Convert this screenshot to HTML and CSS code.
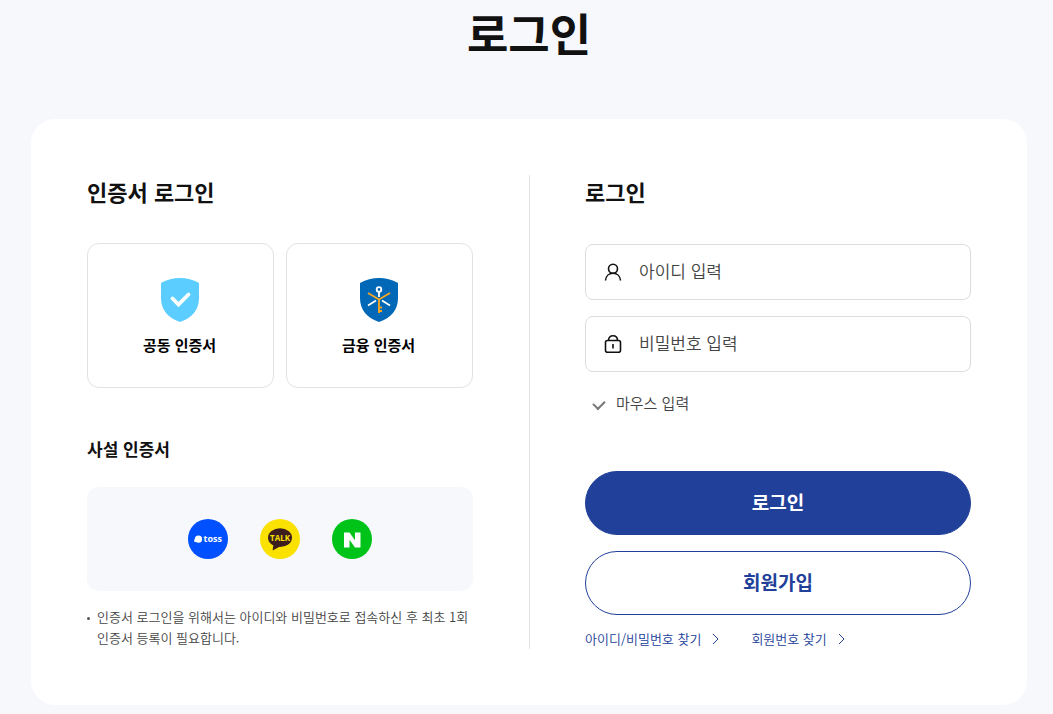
FILE: index.html
```html
<!DOCTYPE html>
<html lang="ko">
<head>
    <meta charset="UTF-8">
    <meta name="viewport" content="width=device-width, initial-scale=1.0">
    <title>로그인</title>
    <link rel="stylesheet" href="styles.css">
</head>
<body>
    <main class="page">
        <h1 class="page-title">로그인</h1>

        <div class="login-box">
            <!-- Certificate login -->
            <section class="cert">
                <h2 class="section-title">인증서 로그인</h2>

                <div class="cert-list">
                    <button type="button" class="cert-card">
                        <svg width="38" height="44" viewBox="0 0 38 44" aria-hidden="true">
                            <path d="M0 5Q9 0 19 0T38 5V20C38 32 31 40 19 44C7 40 0 32 0 20Z" fill="#5bceff"/>
                            <path d="M11.500 20.500L17.500 26.500L27.500 16.500" fill="none" stroke="#fff" stroke-width="3.8" stroke-linecap="round"/>
                        </svg>
                        <span>공동 인증서</span>
                    </button>
                    <button type="button" class="cert-card">
                        <svg width="38" height="44" viewBox="0 0 38 44" aria-hidden="true">
                            <path d="M0 5Q9 0 19 0T38 5V20C38 32 31 40 19 44C7 40 0 32 0 20Z" fill="#0068b7"/>
                            <g fill="none" stroke="#fff" stroke-width="1.8">
                                <circle cx="19" cy="11.5" r="2.3"/>
                                <path d="M19 14V19M16 22.5L8 27.5M22 22.5L30 27.5"/>
                            </g>
                            <path d="M8 15L19 21.5L30 15M19 21V35M19 29.5H22M19 33H22" fill="none" stroke="#f5a623" stroke-width="1.9"/>
                        </svg>
                        <span>금융 인증서</span>
                    </button>
                </div>

                <h3 class="sub-title">사설 인증서</h3>
                <div class="private-list">
                    <button type="button" class="round-btn" aria-label="toss">
                        <svg width="40" height="40" viewBox="0 0 40 40">
                            <circle cx="20" cy="20" r="20" fill="#0050ff"/>
                            <circle cx="10.5" cy="20.2" r="3.6" fill="#fff"/>
                            <path d="M10 17L8.2 17.6Q6.2 20 6 22.8L8.5 23Z" fill="#fff"/>
                            <text x="15.5" y="23" class="toss-text">toss</text>
                        </svg>
                    </button>
                    <button type="button" class="round-btn" aria-label="kakao talk">
                        <svg width="40" height="40" viewBox="0 0 40 40">
                            <circle cx="20" cy="20" r="20" fill="#fae100"/>
                            <ellipse cx="20" cy="18.7" rx="12" ry="9.4" fill="#3c1e1e"/>
                            <path d="M13.5 25L12.6 31.5L20 27.5Z" fill="#3c1e1e"/>
                            <text x="20" y="22" class="talk-text">TALK</text>
                        </svg>
                    </button>
                    <button type="button" class="round-btn" aria-label="naver">
                        <svg width="40" height="40" viewBox="0 0 40 40">
                            <circle cx="20" cy="20" r="20" fill="#00c31a"/>
                            <path d="M12 13.5H17.5L23 21.2V13.5H28.5V28.5H23L17.5 20.8V28.5H12Z" fill="#fff"/>
                        </svg>
                    </button>
                </div>

                <ul class="notice">
                    <li>인증서 로그인을 위해서는 아이디와 비밀번호로 접속하신 후 최초 1회 인증서 등록이 필요합니다.</li>
                </ul>
            </section>

            <!-- ID / password login -->
            <section class="account">
                <h2 class="section-title">로그인</h2>

                <form class="login-form">
                    <label class="field">
                        <svg width="18" height="18" viewBox="0 0 18 18" aria-hidden="true">
                            <g fill="none" stroke="#111" stroke-width="1.6">
                                <circle cx="9" cy="5.8" r="4.5"/>
                                <path d="M1.500 17.500C1.800 13 5 10.300 9 10.300S16.200 13 16.500 17.500"/>
                            </g>
                        </svg>
                        <input type="text" placeholder="아이디 입력" aria-label="아이디">
                    </label>
                    <label class="field">
                        <svg width="18" height="18" viewBox="0 0 18 18" aria-hidden="true">
                            <g fill="none" stroke="#111" stroke-width="1.6">
                                <rect x="1.5" y="5.500" width="15" height="11.700" rx="2"/>
                                <path d="M4.500 5.500C4.500 2.500 6.300.8 9 .8S13.500 2.500 13.500 5.500M9 9V13.500"/>
                            </g>
                        </svg>
                        <input type="password" placeholder="비밀번호 입력" aria-label="비밀번호">
                    </label>
                    <label class="mouse-check">
                        <input type="checkbox">
                        마우스 입력
                    </label>

                    <button type="submit" class="btn btn-primary">로그인</button>
                    <button type="button" class="btn btn-line">회원가입</button>
                </form>

                <div class="find-links">
                    <a href="#">아이디/비밀번호 찾기
                        <svg width="7" height="12" viewBox="0 0 7 12" aria-hidden="true"><path d="M1 1L6 6L1 11" fill="none" stroke="#214099"/></svg>
                    </a>
                    <a href="#">회원번호 찾기
                        <svg width="7" height="12" viewBox="0 0 7 12" aria-hidden="true"><path d="M1 1L6 6L1 11" fill="none" stroke="#214099"/></svg>
                    </a>
                </div>
            </section>
        </div>
    </main>
</body>
</html>
```
FILE: styles.css
```css
* { box-sizing: border-box; }

body {
    margin: 0;
    background-color: #f7f8fc;
    color: #111;
    font-family: "Noto Sans CJK KR", sans-serif;
    font-weight: 350;
}

button, input {
    font-family: inherit;
    color: inherit;
}

button { cursor: pointer; }

h1, h2, h3, ul {
    margin: 0;
    padding: 0;
}

.page { padding: 0 26px 9px 31px; }

.page-title {
    margin-bottom: 54px;
    font-size: 45px;
    line-height: 65px;
    font-weight: 700;
    text-align: center;
}

/* White box with the two columns */
.login-box {
    display: flex;
    padding: 56px;
    background-color: #fff;
    border-radius: 24px;
}

.cert, .account {
    flex: 1 1 0;
    min-width: 0;
}

.cert { padding-right: 56px; }

.account {
    padding-left: 55px;
    border-left: 1px solid #e2e2e2;
}

.section-title {
    margin-bottom: 36px;
    font-size: 22px;
    line-height: 32px;
    font-weight: 700;
}

/* Certificate cards */
.cert-list {
    display: flex;
    gap: 12px;
}

.cert-card {
    flex: 1;
    display: flex;
    flex-direction: column;
    align-items: center;
    gap: 11px;
    padding: 34px 2px 31px 0;
    background-color: #fff;
    border: 1px solid #e2e2e2;
    border-radius: 12px;
    color: #000;
    font-size: 15px;
    line-height: 23px;
    font-weight: 700;
}

.sub-title {
    margin: 48px 0 26px;
    font-size: 17px;
    line-height: 25px;
    font-weight: 700;
}

.private-list {
    display: flex;
    justify-content: center;
    gap: 32px;
    padding: 32px;
    background-color: #f7f8fc;
    border-radius: 12px;
}

.round-btn {
    width: 40px;
    height: 40px;
    padding: 0;
    border: 0;
    background: none;
    border-radius: 50%;
}

.round-btn svg { display: block; }

.toss-text {
    fill: #fff;
    font: 700 9px "Open Sans", sans-serif;
}

.talk-text {
    fill: #fae100;
    font: 700 8px "Open Sans", sans-serif;
    text-anchor: middle;
}

.notice {
    margin-top: 15px;
    list-style: none;
    color: #444;
    font-size: 13px;
    line-height: 21px;
}

.notice li {
    display: flex;
    gap: 7px;
}

.notice li::before {
    content: "";
    flex: none;
    width: 3px;
    height: 3px;
    margin-top: 11px;
    background-color: #555;
    border-radius: 50%;
}

/* Form */
.login-form {
    display: flex;
    flex-direction: column;
    gap: 16px;
    padding-top: 1px;
}

.field {
    display: flex;
    align-items: center;
    gap: 17px;
    height: 56px;
    padding: 0 18px;
    border: 1px solid #ddd;
    border-radius: 8px;
}

.field svg { flex: none; }

.field input {
    flex: 1;
    min-width: 0;
    padding: 0 0 2px;
    border: 0;
    outline: 0;
    background: none;
    font-size: 17px;
    line-height: 26px;
}

.field input::placeholder {
    color: #444;
    opacity: 1;
    font-weight: 350;
}

.mouse-check {
    display: flex;
    align-items: center;
    gap: 12px;
    margin-bottom: 37px;
    padding-left: 8px;
    color: #444;
    font-size: 15px;
    line-height: 30px;
}

.mouse-check input {
    appearance: none;
    display: flex;
    justify-content: center;
    width: 11px;
    height: 10px;
    margin: 0;
}

.mouse-check input::before {
    content: "";
    width: 6px;
    height: 9px;
    border: solid #777;
    border-width: 0 2px 2px 0;
    transform: rotate(45deg);
}

.mouse-check input:checked::before { border-color: #214099; }

.btn {
    height: 64px;
    padding: 0 0 3px;
    border: 1px solid #214099;
    border-radius: 32px;
    font-size: 19px;
    font-weight: 700;
}

.btn-primary {
    background-color: #214099;
    color: #fff;
}

.btn-line {
    background-color: #fff;
    color: #214099;
}

.find-links {
    display: flex;
    gap: 32px;
    margin-top: 13px;
}

.find-links a {
    display: flex;
    align-items: center;
    gap: 11px;
    color: #214099;
    font-size: 13px;
    line-height: 21px;
    text-decoration: none;
}
```
